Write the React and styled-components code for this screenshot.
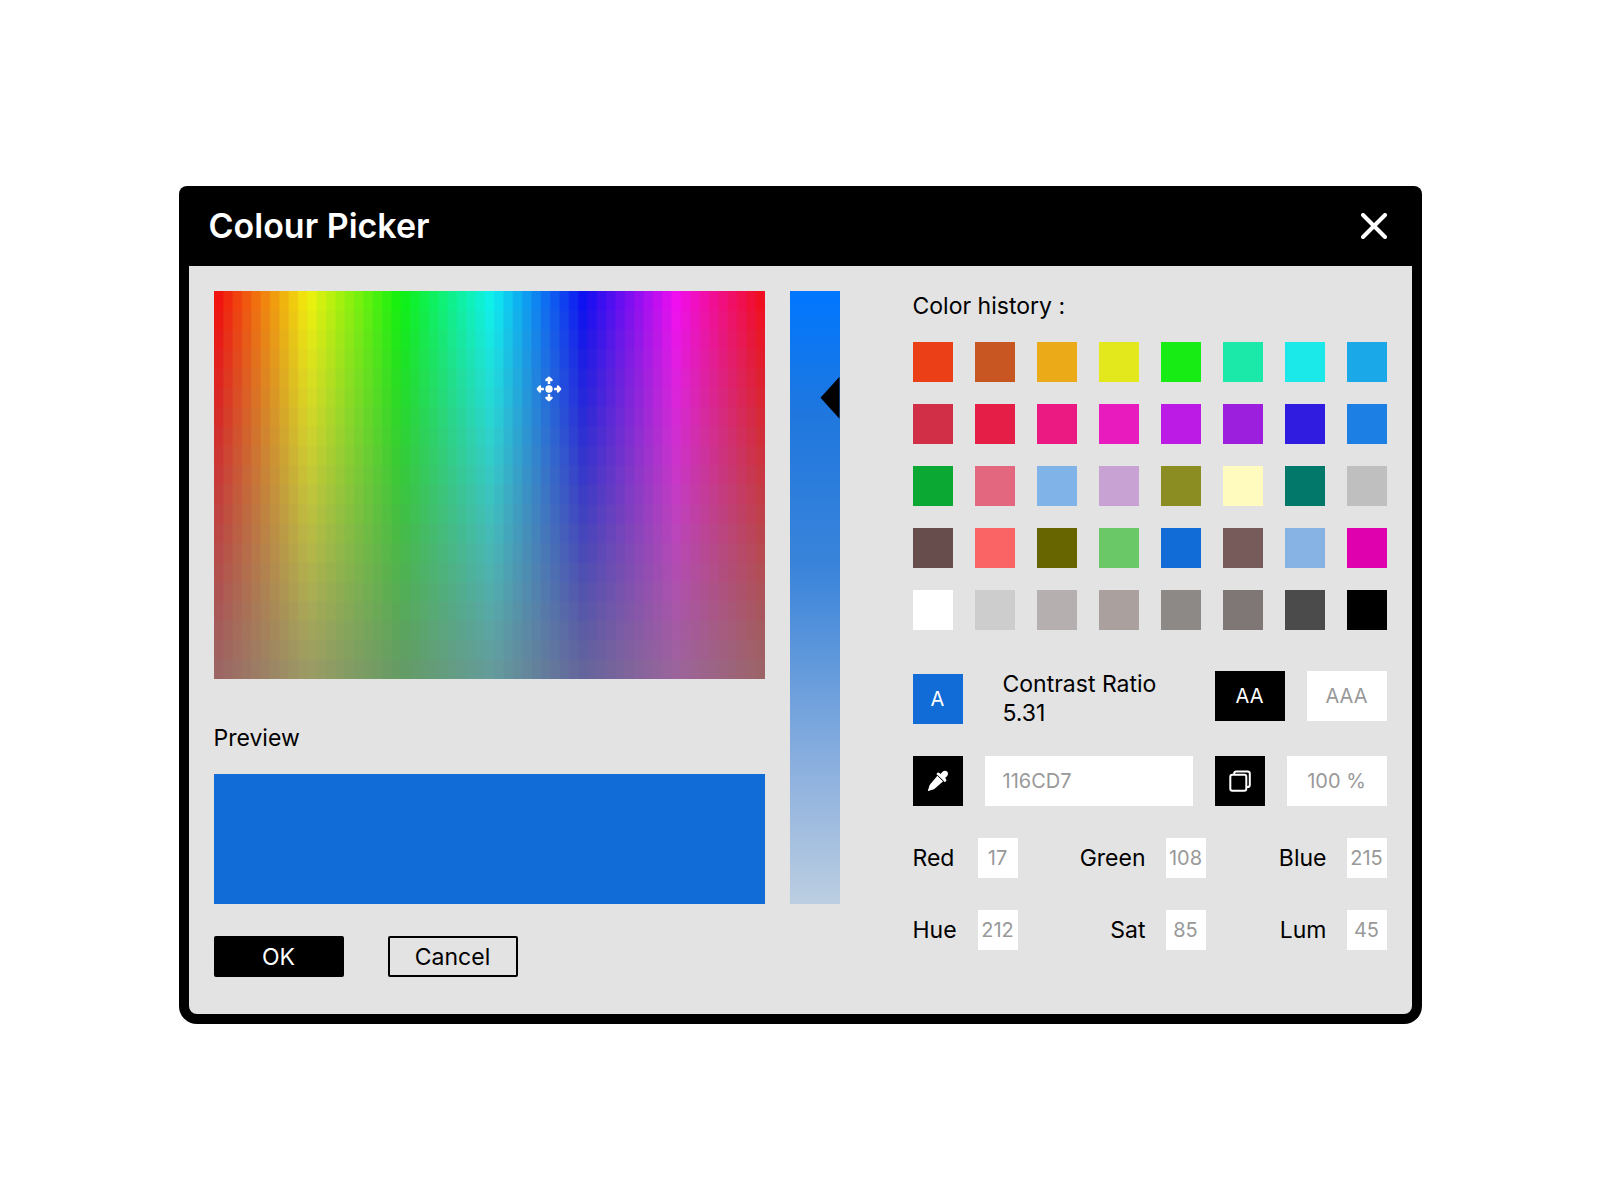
// Libraries
import React, { useState } from 'react';
import styled, { createGlobalStyle } from 'styled-components';

const HISTORY = [
  '#eb4017', '#c85623', '#ebaa17', '#e2e81b', '#17ed15', '#1be9a9', '#1be8e8', '#1ba8e8',
  '#d12f47', '#e41e46', '#ea1a82', '#e81bbe', '#bb1be4', '#9b1fdc', '#301be1', '#1b7fe4',
  '#0ba834', '#e3687f', '#80b4e9', '#c9a2d4', '#8b8d23', '#fffbbf', '#02786b', '#bfbfbf',
  '#674e4c', '#fa6464', '#666500', '#6bc866', '#116cd7', '#775a5a', '#86b3e4', '#df00ae',
  '#ffffff', '#cdcdcd', '#b5afaf', '#aaa09e', '#8c8987', '#7e7776', '#4b4b4b', '#000000',
];

const COLUMNS = 59;
const ROWS = 20;

// Builds a linear-gradient made of bands with slightly soft edges
const bands = (direction, count, colorAt) => {
  const stops = Array.from({ length: count }, (_, i) => {
    const from = (((i + 0.1) / count) * 100).toFixed(3);
    const to = (((i + 0.9) / count) * 100).toFixed(3);
    return `${colorAt((i + 0.2) / count)} ${from}% ${to}%`;
  });
  return `linear-gradient(${direction}, ${stops.join(', ')})`;
};

const hueBands = bands('to right', COLUMNS, (t) => `hsl(${t * 360}, 100%, 50%)`);
const greyBands = bands(
  'to bottom',
  ROWS,
  (t) => `rgba(128, 128, 128, ${(0.11 + t * 0.7).toFixed(3)})`
);

const App = () => {
  const [color, setColor] = useState('#116cd7');
  const [level, setLevel] = useState(15);
  const [values, setValues] = useState({
    hex: '116CD7',
    opacity: '100 %',
    red: '17',
    green: '108',
    blue: '215',
    hue: '212',
    sat: '85',
    lum: '45',
  });

  const handleChange = (e) => {
    setValues({ ...values, [e.target.name]: e.target.value });
  };

  const renderField = (name, label, align) => (
    <Field htmlFor={name} $align={align}>
      {label}
      <NumberInput
        id={name}
        name={name}
        type="text"
        value={values[name]}
        onChange={handleChange}
      />
    </Field>
  );

  return (
    <Page>
      <GlobalStyle />
      <Dialog role="dialog" aria-labelledby="title">
        <Header>
          <Title id="title">Colour Picker</Title>
          <CloseButton type="button" aria-label="Close">
            <svg width="26" height="26" viewBox="0 0 26 26">
              <path
                d="M2 2L24 24M24 2L2 24"
                stroke="#fff"
                strokeWidth="4"
                strokeLinecap="round"
              />
            </svg>
          </CloseButton>
        </Header>

        <Body>
          <Left>
            <Picker>
              <div>
                <Spectrum>
                  <Cursor viewBox="0 0 26 26" width="26" height="26">
                    <circle cx="13" cy="13" r="3.7" />
                    {[0, 90, 180, 270].map((angle) => (
                      <path
                        key={angle}
                        transform={`rotate(${angle} 13 13)`}
                        d="M13 0.6C13.6 0.6 16.8 3.2 16.8 4.2C16.8 5 15.6 5.4 14.3 5V7.4C14.3 8.2 11.7 8.2 11.7 7.4V5C10.4 5.4 9.2 5 9.2 4.2C9.2 3.2 12.4 0.6 13 0.6Z"
                      />
                    ))}
                  </Cursor>
                </Spectrum>
                <PreviewLabel>Preview</PreviewLabel>
                <Preview $color={color} />
              </div>
              <LevelSlider
                type="range"
                min="0"
                max="100"
                aria-label="Level"
                value={level}
                onChange={(e) => setLevel(Number(e.target.value))}
              />
            </Picker>
            <Actions>
              <ActionButton type="button" $primary>
                OK
              </ActionButton>
              <ActionButton type="button">Cancel</ActionButton>
            </Actions>
          </Left>

          <Right>
            <Heading>Color history :</Heading>
            <Swatches>
              {HISTORY.map((item) => (
                <Swatch
                  key={item}
                  type="button"
                  aria-label={item}
                  $color={item}
                  onClick={() => setColor(item)}
                />
              ))}
            </Swatches>

            <ContrastRow>
              <Sample $color={color}>A</Sample>
              <Ratio>
                Contrast Ratio
                <br />
                5.31
              </Ratio>
              <Levels>
                <LevelButton type="button" $active $width={70}>
                  AA
                </LevelButton>
                <LevelButton type="button" $width={80}>
                  AAA
                </LevelButton>
              </Levels>
            </ContrastRow>

            <ToolRow>
              <IconButton type="button" aria-label="Pick a color">
                <svg width="22" height="22" viewBox="0 0 22 22" fill="#fff">
                  <path d="M10.6 5.6L16.2 11.2L8.2 18.3C7 19.4 5.6 19.8 4.2 20.1L1.6 21C1.1 21.2 0.7 20.8 0.9 20.3L1.8 17.9C2.1 16.4 2.5 15 3.6 13.8Z" />
                  <path d="M9.9 3.3C10.7 2.4 11.7 2.4 12.5 3.1L13.5 3.9L15.8 1.6C17 0.5 18.9 0.5 20.1 1.6C21.3 2.8 21.3 4.7 20.2 5.9L18.2 8.1L18.9 8.9C19.6 9.7 19.6 10.7 18.7 11.5C18.1 12 17.5 12 16.9 11.5L9.9 4.7C9.5 4.2 9.5 3.7 9.9 3.3Z" />
                  <path d="M10.3 5.2L16.6 11.4" stroke="#000" />
                </svg>
              </IconButton>
              <HexInput
                name="hex"
                type="text"
                aria-label="Hex"
                value={values.hex}
                onChange={handleChange}
              />
              <IconButton type="button" aria-label="Copy">
                <svg
                  width="22"
                  height="22"
                  viewBox="0 0 22 22"
                  fill="none"
                  stroke="#fff"
                  strokeWidth="2"
                >
                  <rect x="1.3" y="4.7" width="16" height="16" rx="2" />
                  <path d="M5.2 4.5V3.6C5.2 2.3 6 1.4 7.3 1.4H18.6C19.9 1.4 20.8 2.3 20.8 3.6V15C20.8 16.3 19.9 17.1 18.6 17.1H17.5" />
                </svg>
              </IconButton>
              <OpacityInput
                name="opacity"
                type="text"
                aria-label="Opacity"
                value={values.opacity}
                onChange={handleChange}
              />
            </ToolRow>

            <Fields>
              {renderField('red', 'Red', 'space-between')}
              {renderField('green', 'Green')}
              {renderField('blue', 'Blue')}
              {renderField('hue', 'Hue', 'space-between')}
              {renderField('sat', 'Sat')}
              {renderField('lum', 'Lum')}
            </Fields>
          </Right>
        </Body>
      </Dialog>
    </Page>
  );
};

const GlobalStyle = createGlobalStyle`
  * {
    box-sizing: border-box;
  }

  body {
    margin: 0;
    background: #fff;
  }

  body, button, input {
    font-family: Inter, 'Liberation Sans', sans-serif;
  }

  button, input {
    margin: 0;
    padding: 0;
    border: 0;
    border-radius: 0;
  }

  button {
    cursor: pointer;
  }
`;

const Page = styled.main`
  padding: 186px 24px 24px;
`;

const Dialog = styled.section`
  max-width: 1243px;
  margin: 0 auto;
  padding: 0 10px 10px;
  background: #000;
  border-radius: 8px 8px 18px 18px;
`;

const Header = styled.header`
  display: flex;
  align-items: center;
  justify-content: space-between;
  height: 80px;
  padding: 0 25px 0 20px;
`;

const Title = styled.h1`
  margin: 0;
  color: #fff;
  font-size: 34px;
  font-weight: 600;
  line-height: 44px;
`;

const CloseButton = styled.button`
  display: flex;
  background: none;
`;

const Body = styled.div`
  display: grid;
  grid-template-columns: minmax(0, 1fr) 474px;
  column-gap: 73px;
  padding: 25px 25px 37px;
  background: #e3e3e3;
  border-radius: 0 0 8px 8px;
`;

const Left = styled.div`
  display: flex;
  flex-direction: column;
  gap: 32px;
`;

const Picker = styled.div`
  display: grid;
  grid-template-columns: minmax(0, 1fr) 50px;
  gap: 25px;
`;

const Spectrum = styled.div`
  position: relative;
  height: 388px;
  background: ${greyBands}, ${hueBands};
`;

const Cursor = styled.svg`
  position: absolute;
  top: 22%;
  left: 58.5%;
  fill: #fff;
  cursor: move;
`;

const Heading = styled.h2`
  margin: 0;
  color: #000;
  font-size: 23px;
  font-weight: 400;
  line-height: 30px;
`;

const PreviewLabel = styled(Heading)`
  margin: 44px 0 21px;
`;

const Preview = styled.div`
  height: 130px;
  background: ${({ $color }) => $color};
`;

const LevelSlider = styled.input`
  appearance: none;
  writing-mode: vertical-lr;
  width: 50px;
  height: 100%;
  background: linear-gradient(
    #0077ff,
    #1f77de 20%,
    #3a84da 45%,
    #8cb0de 78%,
    #bccee1
  );

  &::-webkit-slider-thumb {
    appearance: none;
    width: 50px;
    height: 42px;
    background: #000;
    clip-path: polygon(31px 50%, 100% 0, 100% 100%);
  }
`;

const Actions = styled.div`
  display: flex;
  gap: 44px;
`;

const ActionButton = styled.button`
  width: 130px;
  height: 41px;
  border: 2px solid #000;
  border-radius: 2px;
  background: ${({ $primary }) => ($primary ? '#000' : 'transparent')};
  color: ${({ $primary }) => ($primary ? '#fff' : '#000')};
  font-size: 23px;
  line-height: 30px;
`;

const Right = styled.div`
  display: flex;
  flex-direction: column;
`;

const Swatches = styled.div`
  display: grid;
  grid-template-columns: repeat(8, 40px);
  gap: 22px;
  margin-top: 21px;
`;

const Swatch = styled.button`
  height: 40px;
  background: ${({ $color }) => $color};
`;

const ContrastRow = styled.div`
  display: flex;
  align-items: center;
  margin-top: 40px;
`;

const Sample = styled.div`
  display: flex;
  align-items: center;
  justify-content: center;
  width: 50px;
  height: 50px;
  background: ${({ $color }) => $color};
  color: #fff;
  font-size: 20px;
`;

const Ratio = styled.p`
  margin: 0 0 0 40px;
  font-size: 23px;
  line-height: 29px;
`;

const Levels = styled.div`
  display: flex;
  align-self: flex-start;
  gap: 22px;
  margin-left: auto;
  padding-top: 1px;
`;

const LevelButton = styled.button`
  width: ${({ $width }) => $width}px;
  height: 50px;
  background: ${({ $active }) => ($active ? '#000' : '#fff')};
  color: ${({ $active }) => ($active ? '#fff' : '#999')};
  font-size: 20px;
`;

const ToolRow = styled.div`
  display: flex;
  gap: 22px;
  margin-top: 28px;
`;

const IconButton = styled.button`
  display: flex;
  align-items: center;
  justify-content: center;
  width: 50px;
  height: 50px;
  background: #000;
`;

const TextInput = styled.input`
  min-width: 0;
  background: #fff;
  color: #999;
  font-size: 20px;
`;

const HexInput = styled(TextInput)`
  flex: 1;
  padding-left: 18px;
`;

const OpacityInput = styled(TextInput)`
  width: 100px;
  text-align: center;
`;

const NumberInput = styled(TextInput)`
  width: 40px;
  height: 40px;
  text-align: center;
`;

const Fields = styled.div`
  display: grid;
  grid-template-columns: 105fr 188fr 181fr;
  row-gap: 32px;
  margin-top: 32px;
`;

const Field = styled.label`
  display: flex;
  align-items: center;
  justify-content: ${({ $align }) => $align || 'flex-end'};
  gap: 20px;
  font-size: 23px;
  line-height: 29px;
`;

export default App;
